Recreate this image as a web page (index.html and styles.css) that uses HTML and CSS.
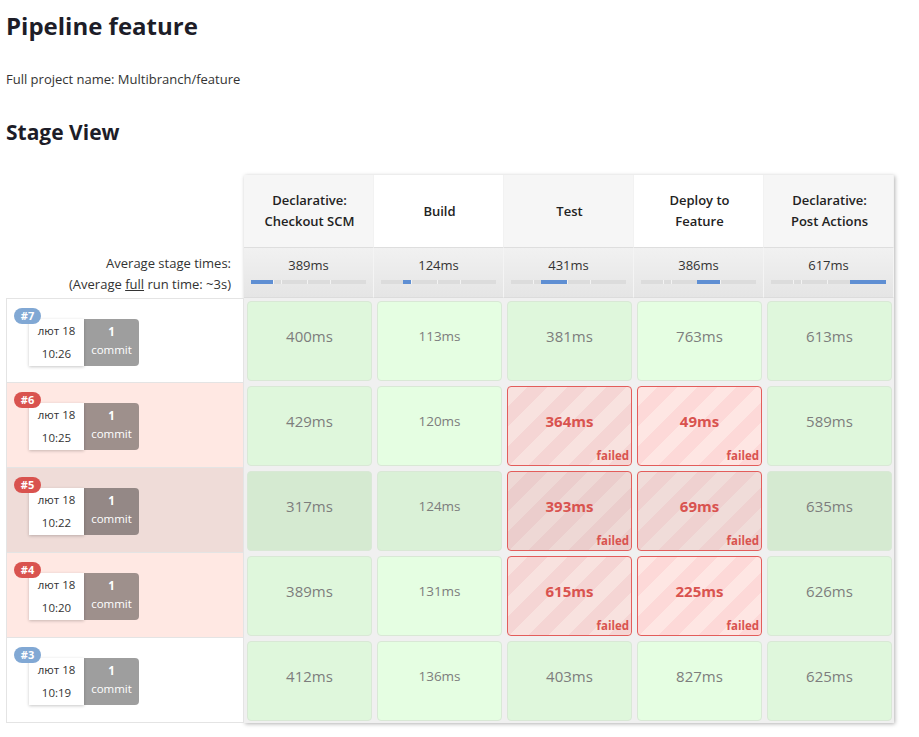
FILE: index.html
```html
<!DOCTYPE html>
<html lang="uk">
<head>
    <meta charset="UTF-8">
    <title>Pipeline feature</title>
    <link rel="stylesheet" href="styles.css">
</head>
<body>
<h1>Pipeline feature</h1>
<p class="project">Full project name: Multibranch/feature</p>
<h2>Stage View</h2>

<div class="stage-view">
    <!-- left column: builds -->
    <div class="builds">
        <div class="builds-head"></div>
        <div class="avg-label">Average stage times:<br>(Average <u>full</u> run time: ~3s)</div>

        <div class="build">
            <span class="badge blue">#7</span>
            <div class="run"><div class="date">лют 18<br>10:26</div><div class="commit"><b>1</b><br>commit</div></div>
        </div>
        <div class="build failed">
            <span class="badge red">#6</span>
            <div class="run"><div class="date">лют 18<br>10:25</div><div class="commit"><b>1</b><br>commit</div></div>
        </div>
        <div class="build failed hover">
            <span class="badge red">#5</span>
            <div class="run"><div class="date">лют 18<br>10:22</div><div class="commit"><b>1</b><br>commit</div></div>
        </div>
        <div class="build failed">
            <span class="badge red">#4</span>
            <div class="run"><div class="date">лют 18<br>10:20</div><div class="commit"><b>1</b><br>commit</div></div>
        </div>
        <div class="build">
            <span class="badge blue">#3</span>
            <div class="run"><div class="date">лют 18<br>10:19</div><div class="commit"><b>1</b><br>commit</div></div>
        </div>
    </div>

    <!-- stages grid -->
    <div class="stages">
        <div class="head odd">Declarative:<br>Checkout SCM</div>
        <div class="head">Build</div>
        <div class="head odd">Test</div>
        <div class="head">Deploy to<br>Feature</div>
        <div class="head odd">Declarative:<br>Post Actions</div>

        <div class="avg">389ms<div class="track"><i class="on" style="flex:22.4"></i><i style="flex:7.1"></i><i style="flex:24.8"></i><i style="flex:22.2"></i><i style="flex:35.5"></i></div></div>
        <div class="avg">124ms<div class="track"><i style="flex:22.4"></i><i class="on" style="flex:7.1"></i><i style="flex:24.8"></i><i style="flex:22.2"></i><i style="flex:35.5"></i></div></div>
        <div class="avg">431ms<div class="track"><i style="flex:22.4"></i><i style="flex:7.1"></i><i class="on" style="flex:24.8"></i><i style="flex:22.2"></i><i style="flex:35.5"></i></div></div>
        <div class="avg">386ms<div class="track"><i style="flex:22.4"></i><i style="flex:7.1"></i><i style="flex:24.8"></i><i class="on" style="flex:22.2"></i><i style="flex:35.5"></i></div></div>
        <div class="avg">617ms<div class="track"><i style="flex:22.4"></i><i style="flex:7.1"></i><i style="flex:24.8"></i><i style="flex:22.2"></i><i class="on" style="flex:35.5"></i></div></div>

        <!-- #7 -->
        <div class="cell"><div class="box ok odd">400ms</div></div>
        <div class="cell"><div class="box ok small">113ms</div></div>
        <div class="cell"><div class="box ok odd">381ms</div></div>
        <div class="cell"><div class="box ok">763ms</div></div>
        <div class="cell"><div class="box ok odd">613ms</div></div>
        <!-- #6 -->
        <div class="cell"><div class="box ok odd">429ms</div></div>
        <div class="cell"><div class="box ok small">120ms</div></div>
        <div class="cell"><div class="box fail odd">364ms<span class="tag">failed</span></div></div>
        <div class="cell"><div class="box fail">49ms<span class="tag">failed</span></div></div>
        <div class="cell"><div class="box ok odd">589ms</div></div>
        <!-- #5 -->
        <div class="cell hover"><div class="box ok odd">317ms</div></div>
        <div class="cell hover"><div class="box ok small">124ms</div></div>
        <div class="cell hover"><div class="box fail odd">393ms<span class="tag">failed</span></div></div>
        <div class="cell hover"><div class="box fail">69ms<span class="tag">failed</span></div></div>
        <div class="cell hover"><div class="box ok odd">635ms</div></div>
        <!-- #4 -->
        <div class="cell"><div class="box ok odd">389ms</div></div>
        <div class="cell"><div class="box ok small">131ms</div></div>
        <div class="cell"><div class="box fail odd">615ms<span class="tag">failed</span></div></div>
        <div class="cell"><div class="box fail">225ms<span class="tag">failed</span></div></div>
        <div class="cell"><div class="box ok odd">626ms</div></div>
        <!-- #3 -->
        <div class="cell"><div class="box ok odd">412ms</div></div>
        <div class="cell"><div class="box ok small">136ms</div></div>
        <div class="cell"><div class="box ok odd">403ms</div></div>
        <div class="cell"><div class="box ok">827ms</div></div>
        <div class="cell"><div class="box ok odd">625ms</div></div>
    </div>
</div>
</body>
</html>
```

FILE: styles.css
```css
* {
    box-sizing: border-box;
}

body {
    margin: 0;
    padding: 8px 6px;
    font-family: "Open Sans", "Noto Sans", sans-serif;
    font-size: 13px;
    color: #333;
    background: #fff;
}

h1 {
    margin: 0;
    font-size: 24px;
    line-height: 36px;
    font-weight: 700;
    color: #1d1d28;
}

.project {
    margin: 26px 0 0;
    line-height: 18px;
    color: #333;
}

h2 {
    margin: 29px 0 0;
    font-size: 21px;
    line-height: 30px;
    font-weight: 700;
    color: #1d1d28;
}

.stage-view {
    display: flex;
    align-items: flex-start;
    margin-top: 28px;
}

/* left column */
.builds {
    width: 238px;
    display: flex;
    flex-direction: column;
}

.builds-head {
    height: 72px;
}

.avg-label {
    height: 51px;
    padding: 6px 13px 0 0;
    text-align: right;
    line-height: 21px;
    color: #333;
}

.build {
    position: relative;
    height: 85px;
    border: 1px solid #e4e4e4;
    border-top: none;
    background: #fff;
    padding: 20px 0 0 22px;
}

.build:nth-child(3) {
    border-top: 1px solid #e4e4e4;
}

.build.failed {
    background: #ffe8e3;
}

.build.failed.hover {
    background: #efdcd8;
}

.badge {
    position: absolute;
    left: 7px;
    top: 9px;
    z-index: 2;
    width: 27px;
    height: 16px;
    border-radius: 8px;
    color: #fff;
    font-size: 11px;
    font-weight: 700;
    line-height: 16px;
    text-align: center;
}

.badge.blue {
    background: #81a8d4;
}

.badge.red {
    background: #d9534f;
}

.run {
    display: flex;
    height: 47px;
}

.date {
    width: 55px;
    background: #fff;
    box-shadow: 0 1px 3px rgba(0, 0, 0, 0.22);
    font-size: 11.5px;
    line-height: 23px;
    text-align: center;
    color: #333;
}

.commit {
    width: 55px;
    background: rgba(0, 0, 0, 0.38);
    border-radius: 0 4px 4px 0;
    color: #fff;
    font-size: 11.5px;
    line-height: 18px;
    padding-top: 4px;
    text-align: center;
}

/* stages */
.stages {
    display: grid;
    grid-template-columns: repeat(5, 130px);
    grid-template-rows: 72px 51px repeat(5, 85px);
    background: #f2f2f2;
    box-shadow: 1px 1px 4px rgba(0, 0, 0, 0.3);
}

.head {
    display: flex;
    align-items: center;
    justify-content: center;
    text-align: center;
    background: #fff;
    font-weight: 600;
    line-height: 21px;
    color: #222;
    padding-left: 2px;
    border-right: 1px solid #f2f2f2;
}

.head.odd {
    background: #f6f6f6;
}

.avg {
    padding: 8px 7px 0;
    text-align: center;
    line-height: 19px;
    color: #333;
    background: linear-gradient(#f1f1f1, #e5e5e5);
    border-top: 1px solid #dedede;
    border-bottom: 1px solid #dcdcdc;
    border-right: 1px solid #f4f4f4;
}

.track {
    display: flex;
    height: 4px;
    margin-top: 5px;
    background: #dcdcdc;
}

.track i {
    background: #dcdcdc;
    border-left: 1px solid #f3f3f3;
}

.track i:first-child {
    border-left: none;
}

.track i.on {
    background: #5f8fd3;
    border-left-color: #5f8fd3;
}

.cell {
    display: flex;
    padding: 3px 2px 2px 3px;
    background: #f0f0f0;
}

.box {
    flex: 1;
    position: relative;
    display: flex;
    align-items: center;
    justify-content: center;
    padding-bottom: 10px;
    border: 1px solid #d9e8d6;
    border-radius: 4px;
    font-size: 15px;
    color: #7d7d7d;
}

.box.ok {
    background: #e5fee2;
}

.box.ok.odd {
    background: #dff7dc;
}

.box.small {
    font-size: 13.5px;
}

.cell.hover .box.ok {
    background: #daf1d7;
}

.cell.hover .box.ok.odd {
    background: #d5ead1;
}

.box.fail {
    border-color: #e35d5b;
    color: #d9534f;
    font-weight: 700;
    background: repeating-linear-gradient(135deg, #fee6e3 0 14px, #fdd9d8 14px 28px);
}

.box.fail.odd {
    background: repeating-linear-gradient(135deg, #f8e2df 0 14px, #f5d5d4 14px 28px);
}

.cell.hover .box.fail {
    background: repeating-linear-gradient(135deg, #f0dcd9 0 14px, #efd1d0 14px 28px);
}

.cell.hover .box.fail.odd {
    background: repeating-linear-gradient(135deg, #eed8d5 0 14px, #ebcdcc 14px 28px);
}

.tag {
    position: absolute;
    right: 2px;
    bottom: 2px;
    font-size: 11.5px;
    line-height: 14px;
}
```
